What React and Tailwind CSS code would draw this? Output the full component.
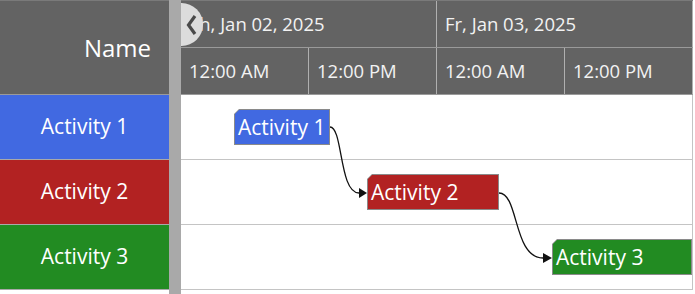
import React from "react";

const activities = [
  { name: "Activity 1", color: "bg-[#4169e1]", left: 53, width: 96 },
  { name: "Activity 2", color: "bg-[#b22222]", left: 186, width: 132 },
  { name: "Activity 3", color: "bg-[#228b22]", left: 371, width: 140 },
];

const days = ["Th, Jan 02, 2025", "Fr, Jan 03, 2025"];
const hours = ["12:00 AM", "12:00 PM", "12:00 AM", "12:00 PM"];

function Bar({ a }) {
  return (
    <div
      className="absolute top-[14px] h-[36px] bg-[#8a8a8a] p-px [clip-path:polygon(5px_0,100%_0,100%_100%,0_100%,0_5px)]"
      style={{ left: a.left, width: a.width }}
    >
      <div
        className={`h-full ${a.color} pl-[3px] flex items-center text-[21px] leading-none text-white whitespace-nowrap [clip-path:polygon(4px_0,100%_0,100%_100%,0_100%,0_4px)]`}
      >
        {a.name}
      </div>
    </div>
  );
}

export default function App() {
  return (
    <div
      className="w-[695px] h-[294px] flex bg-white overflow-hidden"
      style={{ fontFamily: '"Open Sans", "Noto Sans", sans-serif' }}
    >
      {/* names */}
      <div className="w-[169px] flex flex-col">
        <div className="h-[95px] bg-[#636363] border-t border-t-[#7a7a7a] border-b border-[#9a9a9a] flex items-center justify-end pr-[18px] text-[24px] text-white">
          Name
        </div>
        {activities.map((a) => (
          <div
            key={a.name}
            className={`h-[65px] ${a.color} border-b border-[#a9a9a9] flex items-center justify-center text-[21px] text-white`}
          >
            {a.name}
          </div>
        ))}
      </div>

      {/* splitter */}
      <div className="w-[12px] bg-[#a9a9a9]" />

      {/* timeline */}
      <div className="w-[512px] flex flex-col relative">
        <div className="h-[95px] bg-[#636363] border-t border-t-[#7a7a7a] border-b border-[#9a9a9a] text-[18.5px] text-[#f2f2f2]">
          <div className="flex h-[47px] border-b border-[#9a9a9a]">
            {days.map((d) => (
              <div key={d} className="w-[256px] border-r border-[#b0b0b0] flex items-center pl-[8px]">
                {d}
              </div>
            ))}
          </div>
          <div className="flex h-[46px]">
            {hours.map((h, i) => (
              <div key={i} className="w-[128px] border-r border-[#b0b0b0] flex items-center pl-[8px]">
                {h}
              </div>
            ))}
          </div>
        </div>

        {/* scroll back button */}
        <div className="absolute left-0 top-[3px] w-[22px] h-[43px] rounded-r-full bg-[#dcdcdc] flex items-center">
          <svg width="14" height="22" viewBox="0 0 14 22" className="ml-[3px]">
            <path d="M11 2 L4.5 11 L11 20" fill="none" stroke="#4a4a4a" strokeWidth="3.2" strokeLinejoin="miter" />
          </svg>
        </div>

        {activities.map((a) => (
          <div key={a.name} className="h-[65px] border-b border-r border-[#c4c4c4] relative">
            <Bar a={a} />
          </div>
        ))}

        {/* dependency links */}
        <svg className="absolute left-0 top-0 pointer-events-none" width="512" height="294">
          <path d="M149 127 C 162 127, 158 193, 178 193" fill="none" stroke="#111" strokeWidth="1.3" />
          <path d="M178 188 L186 193 L178 198 Z" fill="#111" />
          <path d="M318 193 C 338 193, 332 258, 362 258" fill="none" stroke="#111" strokeWidth="1.3" />
          <path d="M362 253 L371 258 L362 263 Z" fill="#111" />
        </svg>
      </div>
    </div>
  );
}
